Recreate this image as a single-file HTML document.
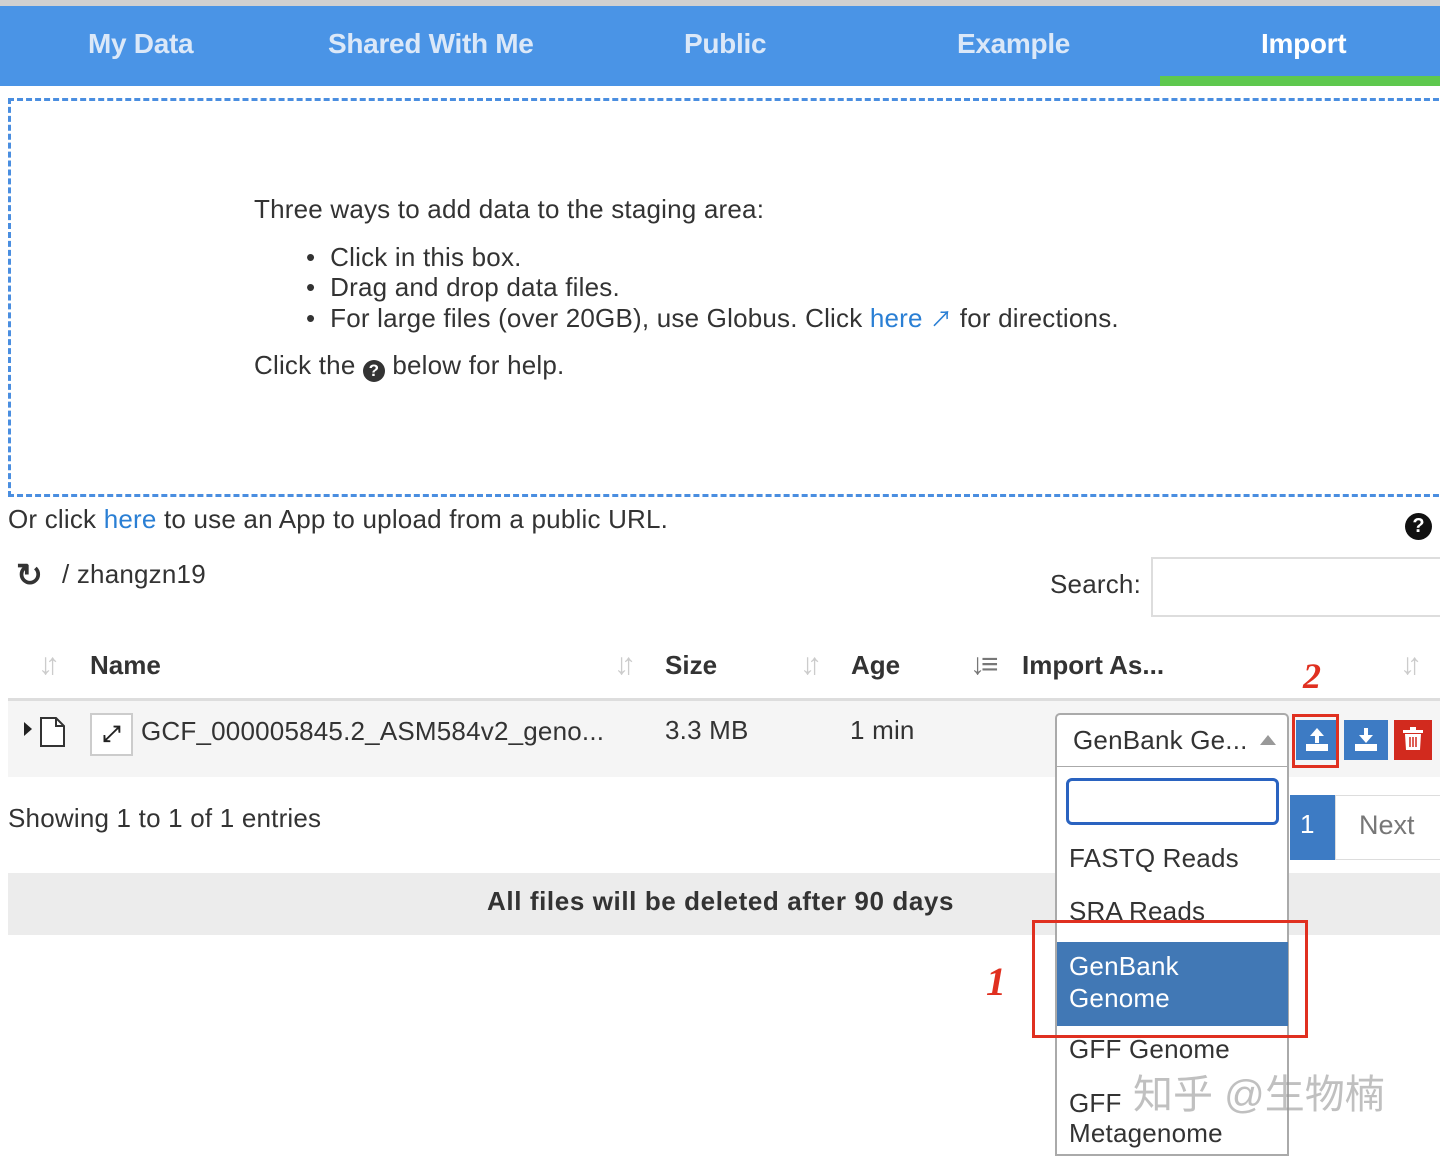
<!DOCTYPE html>
<html><head><meta charset="utf-8"><style>
*{margin:0;padding:0;box-sizing:border-box}
body{width:1440px;height:1146px;position:relative;overflow:hidden;background:#fff;font-family:"Liberation Sans","Noto Sans CJK SC",sans-serif;color:#333}
.a{position:absolute;white-space:nowrap}
.nav{position:absolute;left:0;top:6px;width:1440px;height:80px;background:#4a94e6}
.nav span{position:absolute;top:22px;font-size:28px;font-weight:bold;color:#dbe8f8;letter-spacing:-0.3px}
.t{font-size:26px;color:#333;letter-spacing:0.2px}
.b{font-weight:bold;color:#333;font-size:26px}
.link{color:#2a7fd4}
.sort{color:#ccc;font-size:30px;font-weight:bold;letter-spacing:-8px}
</style></head><body>
<div class="a" style="left:0;top:0;width:1440px;height:6px;background:#d0d0d0"></div>
<div class="nav">
<span style="left:88px">My Data</span>
<span style="left:328px">Shared With Me</span>
<span style="left:684px">Public</span>
<span style="left:957px">Example</span>
<span style="left:1261px;color:#fff">Import</span>
<div class="a" style="left:1160px;top:70px;width:280px;height:10px;background:#5ec84e"></div>
</div>
<div class="a" style="left:8px;top:98px;width:1440px;height:399px;border:3px dashed #4a8ee0"></div>
<div class="a t" style="left:254px;top:194px">Three ways to add data to the staging area:</div>
<div class="a t" style="left:306px;top:242px">•&nbsp;&nbsp;Click in this box.</div>
<div class="a t" style="left:306px;top:272px">•&nbsp;&nbsp;Drag and drop data files.</div>
<div class="a t" style="left:306px;top:302px">•&nbsp;&nbsp;For large files (over 20GB), use Globus. Click <span class="link">here</span> <span class="link" style="font-size:22px">&#x2197;</span> for directions.</div>
<div class="a t" style="left:254px;top:350px">Click the <span style="display:inline-block;width:22px;height:22px;border-radius:50%;background:#333;color:#fff;font-size:17px;text-align:center;line-height:22px;font-weight:bold;vertical-align:-2px">?</span> below for help.</div>
<div class="a t" style="left:8px;top:504px">Or click <span class="link">here</span> to use an App to upload from a public URL.</div>
<div class="a" style="left:1405px;top:513px;width:27px;height:27px;border-radius:50%;background:#111;color:#fff;font-weight:bold;font-size:20px;text-align:center;line-height:27px">?</div>
<div class="a" style="left:16px;top:556px;font-size:32px;font-weight:bold;color:#333">&#x21bb;</div>
<div class="a t" style="left:62px;top:559px">/ zhangzn19</div>
<div class="a t" style="left:1050px;top:569px">Search:</div>
<div class="a" style="left:1151px;top:557px;width:300px;height:60px;border:2px solid #ddd"></div>
<div class="a sort" style="left:38px;top:648px">↓↑</div>
<div class="a b" style="left:90px;top:650px">Name</div>
<div class="a sort" style="left:614px;top:648px">↓↑</div>
<div class="a b" style="left:665px;top:650px">Size</div>
<div class="a sort" style="left:800px;top:648px">↓↑</div>
<div class="a b" style="left:851px;top:650px">Age</div>
<div class="a sort" style="left:970px;top:648px;color:#777;letter-spacing:-4px">↓≡</div>
<div class="a b" style="left:1022px;top:650px">Import As...</div>
<div class="a sort" style="left:1400px;top:648px">↓↑</div>
<div class="a" style="left:1303px;top:655px;color:#e03020;font-size:36px;font-weight:bold;font-style:italic;font-family:'Liberation Serif',serif">2</div>
<div class="a" style="left:8px;top:698px;width:1432px;height:3px;background:#ddd"></div>
<div class="a" style="left:8px;top:701px;width:1432px;height:76px;background:#f5f5f5"></div>
<div class="a" style="left:24px;top:722px;width:0;height:0;border-left:8px solid #222;border-top:7px solid transparent;border-bottom:7px solid transparent"></div>
<svg class="a" style="left:39px;top:716px" width="28" height="32"><path d="M2 2h15l8 8v20H2z" fill="#fff" stroke="#333" stroke-width="2"/><path d="M17 2v8h8" fill="none" stroke="#333" stroke-width="2"/></svg>
<div class="a" style="left:90px;top:713px;width:43px;height:43px;border:2px solid #ccc;background:#fff;font-size:22px;text-align:center;line-height:38px;color:#222;font-weight:bold">⤢</div>
<div class="a t" style="left:141px;top:716px">GCF_000005845.2_ASM584v2_geno...</div>
<div class="a t" style="left:665px;top:715px">3.3 MB</div>
<div class="a t" style="left:850px;top:715px">1 min</div>
<div class="a" style="left:1055px;top:713px;width:234px;height:55px;border:2px solid #aaa;border-radius:5px 5px 0 0;background:#fff"></div>
<div class="a t" style="left:1073px;top:725px">GenBank Ge...</div>
<div class="a" style="left:1260px;top:735px;border-left:8px solid transparent;border-right:8px solid transparent;border-bottom:10px solid #999"></div>
<div class="a" style="left:1296px;top:720px;width:42px;height:40px;background:#3d7bc4"></div>
<svg class="a" style="left:1303px;top:726px" width="28" height="28"><path d="M14 2l-7 8h5v7h4v-7h5z" fill="#fff"/><rect x="3" y="18" width="22" height="7" fill="#fff"/></svg>
<div class="a" style="left:1292px;top:714px;width:47px;height:54px;border:3px solid #e03020"></div>
<div class="a" style="left:1344px;top:720px;width:44px;height:40px;background:#3d7bc4"></div>
<svg class="a" style="left:1352px;top:726px" width="28" height="28"><path d="M14 17l-7-8h5V2h4v7h5z" fill="#fff"/><rect x="3" y="18" width="22" height="7" fill="#fff"/></svg>
<div class="a" style="left:1394px;top:720px;width:38px;height:40px;background:#d22a1e"></div>
<svg class="a" style="left:1402px;top:727px" width="22" height="26"><rect x="1" y="3" width="20" height="3" fill="#fff"/><rect x="8" y="0" width="6" height="4" fill="#fff"/><path d="M3 7h16l-1 16H4z" fill="#fff"/><path d="M8 10v10M11 10v10M14 10v10" stroke="#d22a1e" stroke-width="1.5"/></svg>
<div class="a t" style="left:8px;top:803px">Showing 1 to 1 of 1 entries</div>
<div class="a" style="left:1290px;top:795px;width:45px;height:65px;background:#3d7bc4;color:#fff;font-size:26px;padding:14px 0 0 10px">1</div>
<div class="a" style="left:1335px;top:795px;width:110px;height:65px;border:1px solid #ddd;color:#777;font-size:27px;padding:14px 0 0 23px">Next</div>
<div class="a" style="left:8px;top:873px;width:1432px;height:62px;background:#ececec"></div>
<div class="a b" style="left:487px;top:886px;letter-spacing:0.6px">All files will be deleted after 90 days</div>
<div class="a" style="left:1055px;top:766px;width:234px;height:390px;border:2px solid #aaa;border-top:1px solid #aaa;background:#fff"></div>
<div class="a" style="left:1066px;top:778px;width:213px;height:47px;border:3px solid #2a63c0;border-radius:6px"></div>
<div class="a t" style="left:1069px;top:843px">FASTQ Reads</div>
<div class="a t" style="left:1069px;top:896px">SRA Reads</div>
<div class="a" style="left:1057px;top:942px;width:231px;height:84px;background:#4178b5"></div>
<div class="a t" style="left:1069px;top:950px;color:#fff;line-height:32px;white-space:normal;width:200px">GenBank Genome</div>
<div class="a" style="left:1032px;top:920px;width:276px;height:118px;border:3px solid #e03020"></div>
<div class="a t" style="left:1069px;top:1034px">GFF Genome</div>
<div class="a t" style="left:1069px;top:1088px;line-height:30px;white-space:normal;width:200px">GFF Metagenome</div>
<div class="a" style="left:986px;top:958px;color:#e03020;font-size:40px;font-weight:bold;font-style:italic;font-family:'Liberation Serif',serif">1</div>
<div class="a" style="left:1133px;top:1062px;font-size:40px;color:rgba(150,150,150,0.6)">知乎 @生物楠</div>
</body></html>
